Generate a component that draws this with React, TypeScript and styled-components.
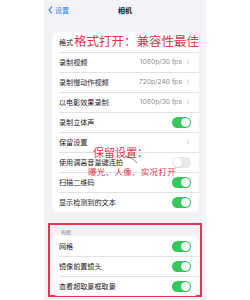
import React from "react";
import styled, { createGlobalStyle } from "styled-components";

const Global = createGlobalStyle`
  html, body { margin: 0; padding: 0; background: #ffffff; }
  body { font-family: "Noto Sans CJK SC", "Noto Sans", sans-serif; }
`;

const Page = styled.div`
  width: 250px;
  height: 300px;
  background: #ffffff;
  overflow: hidden;
`;

const Screen = styled.div`
  position: relative;
  margin-left: 44px;
  width: 162px;
  height: 300px;
  background: #f2f2f7;
  display: flex;
  flex-direction: column;
`;

const NavBar = styled.div`
  height: 20px;
  display: flex;
  align-items: center;
  position: relative;
  padding-left: 4px;
`;

const Back = styled.div`
  display: flex;
  align-items: center;
  gap: 2px;
  color: #2f7cf6;
  font-size: 7px;
`;

const Title = styled.div`
  position: absolute;
  left: 0;
  right: 0;
  text-align: center;
  font-size: 7px;
  font-weight: 600;
  color: #111;
  pointer-events: none;
`;

const Card = styled.div<{ $top?: number }>`
  margin: ${(p) => p.$top ?? 0}px 7px 0 8px;
  background: #ffffff;
  border-radius: 5px;
  overflow: hidden;
`;

const InnerCard = styled(Card)`
  margin: 0;
`;

const Row = styled.div<{ $last?: boolean }>`
  height: 20px;
  display: flex;
  align-items: center;
  padding-left: 7px;
  position: relative;
  &::after {
    content: "";
    display: ${(p) => (p.$last ? "none" : "block")};
    position: absolute;
    left: 7px;
    right: 0;
    bottom: 0;
    height: 0.5px;
    background: #e3e3e6;
  }
`;

const Label = styled.div`
  flex: 1;
  font-size: 7.1px;
  color: #1c1c1e;
  white-space: nowrap;
`;

const Value = styled.div`
  font-size: 6.7px;
  color: #8a8a8e;
  margin-right: 4px;
  font-family: "Inter", "Noto Sans", sans-serif;
`;

const Chevron = styled.svg`
  width: 4px;
  height: 6px;
  margin-right: 9px;
`;

const Track = styled.div<{ $on: boolean }>`
  width: 19px;
  height: 11px;
  border-radius: 6px;
  background: ${(p) => (p.$on ? "#34c759" : "#e9e9eb")};
  margin-right: 8px;
  display: flex;
  align-items: center;
  justify-content: ${(p) => (p.$on ? "flex-end" : "flex-start")};
  padding: 0 1px;
  box-sizing: border-box;
`;

const Knob = styled.div`
  width: 9px;
  height: 9px;
  border-radius: 50%;
  background: #ffffff;
  box-shadow: 0 0.5px 1px rgba(0, 0, 0, 0.15);
`;

const Framed = styled.div`
  margin: 11px 4px 0 4px;
  border: 2px solid #e8344d;
  padding: 0 1px 0 2px;
  height: 74px;
  box-sizing: border-box;
`;

const SectionHeader = styled.div`
  height: 10px;
  padding: 1px 0 0 9px;
  font-size: 5px;
  color: #8a8a8e;
  display: flex;
  align-items: center;
`;

const Annot = styled.div<{ $x: number; $y: number; $size: number; $ls?: number }>`
  position: absolute;
  left: ${(p) => p.$x}px;
  top: ${(p) => p.$y}px;
  font-size: ${(p) => p.$size}px;
  line-height: 1;
  color: #e3324b;
  white-space: nowrap;
  letter-spacing: ${(p) => p.$ls ?? 0}px;
`;

const Scribble = styled.svg`
  position: absolute;
  left: 80px;
  top: 154px;
  width: 20px;
  height: 12px;
`;

type Item = { label: string; value?: string; chevron?: boolean; toggle?: boolean };

const items: Item[] = [
  { label: "格式", chevron: false },
  { label: "录制视频", value: "1080p/30 fps", chevron: true },
  { label: "录制慢动作视频", value: "720p/240 fps", chevron: true },
  { label: "以电影效果录制", value: "1080p/30 fps", chevron: true },
  { label: "录制立体声", toggle: true },
  { label: "保留设置", chevron: true },
  { label: "使用调高音量键连拍", toggle: false },
  { label: "扫描二维码", toggle: true },
  { label: "显示检测到的文本", toggle: true },
];

const composition: Item[] = [
  { label: "网格", toggle: true },
  { label: "镜像前置镜头", toggle: true },
  { label: "查看超取景框取景", toggle: true },
];

function Toggle({ on }: { on: boolean }) {
  return (
    <Track $on={on}>
      <Knob />
    </Track>
  );
}

function SettingRow({ item, last }: { item: Item; last?: boolean }) {
  return (
    <Row $last={last}>
      <Label>{item.label}</Label>
      {item.value && <Value>{item.value}</Value>}
      {item.chevron && (
        <Chevron viewBox="0 0 4 6">
          <path d="M0.8 0.6 L3.2 3 L0.8 5.4" fill="none" stroke="#c4c4c7" strokeWidth="0.8" />
        </Chevron>
      )}
      {item.toggle !== undefined && <Toggle on={item.toggle} />}
    </Row>
  );
}

export default function App() {
  return (
    <Page>
      <Global />
      <Screen>
        <NavBar>
          <Back>
            <svg width="5" height="8" viewBox="0 0 5 8">
              <path d="M4 0.7 L1 4 L4 7.3" fill="none" stroke="#2f7cf6" strokeWidth="1.1" />
            </svg>
            <span>设置</span>
          </Back>
          <Title>相机</Title>
        </NavBar>
        <Card $top={12}>
          {items.map((it, i) => (
            <SettingRow key={it.label} item={it} last={i === items.length - 1} />
          ))}
        </Card>
        <Framed>
          <SectionHeader>构图</SectionHeader>
          <InnerCard>
            {composition.map((it, i) => (
              <SettingRow key={it.label} item={it} last={i === composition.length - 1} />
            ))}
          </InnerCard>
        </Framed>
        <Annot $x={30} $y={35} $size={12.5}>格式打开：兼容性最佳</Annot>
        <Annot $x={49} $y={147} $size={11}>保留设置：</Annot>
        <Annot $x={44} $y={167} $size={8.5} $ls={0.3}>曝光、人像、实况打开</Annot>
        <Scribble viewBox="0 0 20 12">
          <path d="M1 2 C6 3 10 5 13 9" fill="none" stroke="#333" strokeWidth="0.6" />
        </Scribble>
      </Screen>
    </Page>
  );
}
